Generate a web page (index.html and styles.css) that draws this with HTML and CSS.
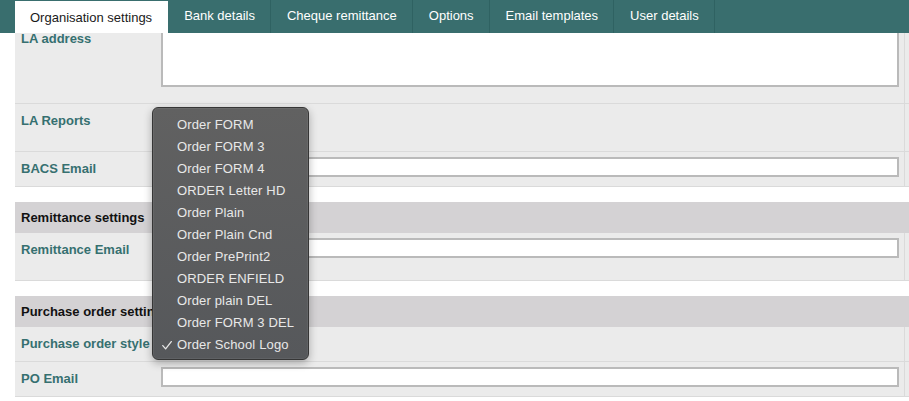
FILE: index.html
```html
<!DOCTYPE html>
<html lang="en">
<head>
<meta charset="utf-8">
<title>Organisation settings</title>
<link rel="stylesheet" href="styles.css">
</head>
<body>
<nav class="tabbar">
  <div class="tab active">Organisation settings</div>
  <div class="tab">Bank details</div>
  <div class="tab">Cheque remittance</div>
  <div class="tab">Options</div>
  <div class="tab">Email templates</div>
  <div class="tab">User details</div>
</nav>
<main class="content">
  <section class="section first">
    <div class="row">
      <div class="label">LA address</div>
      <div class="field"><div class="textarea"></div></div>
      <div class="edge"></div>
    </div>
    <div class="row tall">
      <div class="label">LA Reports</div>
      <div class="field"></div>
      <div class="edge"></div>
    </div>
    <div class="row">
      <div class="label">BACS Email</div>
      <div class="field"><div class="input"></div></div>
      <div class="edge"></div>
    </div>
  </section>
  <section class="section">
    <div class="head">Remittance settings</div>
    <div class="row tall">
      <div class="label">Remittance Email</div>
      <div class="field"><div class="input"></div></div>
      <div class="edge"></div>
    </div>
  </section>
  <section class="section">
    <div class="head">Purchase order settings</div>
    <div class="row">
      <div class="label">Purchase order style</div>
      <div class="field"></div>
      <div class="edge"></div>
    </div>
    <div class="row">
      <div class="label">PO Email</div>
      <div class="field"><div class="input"></div></div>
      <div class="edge"></div>
    </div>
  </section>
</main>
<div class="menu">
  <div class="item">Order FORM</div>
  <div class="item">Order FORM 3</div>
  <div class="item">Order FORM 4</div>
  <div class="item">ORDER Letter HD</div>
  <div class="item">Order Plain</div>
  <div class="item">Order Plain Cnd</div>
  <div class="item">Order PrePrint2</div>
  <div class="item">ORDER ENFIELD</div>
  <div class="item">Order plain DEL</div>
  <div class="item">Order FORM 3 DEL</div>
  <div class="item selected"><svg class="check" width="10" height="9" viewBox="0 0 10 9"><path d="M0.8 4.6 L3.6 7.9 L9.3 0.6" fill="none" stroke="#e6e6e6" stroke-width="1.3" stroke-linecap="round" stroke-linejoin="round"/></svg>Order School Logo</div>
</div>
</body>
</html>
```
FILE: styles.css
```css
body {
  margin: 0;
  font-family: "Liberation Sans", Arial, Helvetica, sans-serif;
  font-size: 13px;
  line-height: 15px;
  background: #ffffff;
  color: #111111;
}

.tabbar {
  position: relative;
  z-index: 2;
  display: flex;
  height: 33px;
  box-sizing: border-box;
  padding-left: 15px;
  background: #396e6e;
}

.tab {
  padding: 8px 15px 0 16px;
  color: #ffffff;
  border-right: 1px solid #2f6262;
  white-space: nowrap;
}

.tab.active {
  margin-top: 1px;
  padding: 9px 16px 0 15px;
  background: #ffffff;
  color: #1a1a1a;
  border-right: none;
}

.content {
  padding-left: 15px;
}

.section {
  margin-bottom: 15px;
}

.section.first {
  margin-top: -11px;
}

.head {
  padding: 8px 6px;
  background: #d4d2d4;
  font-weight: bold;
  color: #111111;
}

.row {
  display: grid;
  grid-template-columns: 146px 1fr 5px;
  min-height: 34px;
  background: #ebebeb;
  border-bottom: 1px solid #dadada;
}

.row.tall {
  min-height: 47px;
}

.label {
  padding: 9px 6px 0;
  font-weight: bold;
  color: #367070;
  white-space: nowrap;
}

.field {
  padding: 5px 5px 0 0;
}

.edge {
  border-left: 1px solid #dadada;
}

.input {
  box-sizing: border-box;
  height: 20px;
  background: #ffffff;
  border: 2px solid #bababa;
}

.textarea {
  box-sizing: border-box;
  height: 60px;
  margin-bottom: 16px;
  background: #ffffff;
  border: 2px solid #bababa;
}

.menu {
  position: absolute;
  left: 152px;
  top: 107px;
  width: 155px;
  padding: 6px 0 3px;
  background: linear-gradient(#616161, #56585b);
  border: 1px solid #363636;
  border-radius: 6px;
  box-shadow: 0 3px 8px rgba(0, 0, 0, 0.3), inset 0 0 0 1px rgba(255, 255, 255, 0.06);
}

.item {
  position: relative;
  padding-left: 24px;
  line-height: 22px;
  color: #e8e8e8;
  letter-spacing: 0.15px;
  white-space: nowrap;
}

.check {
  position: absolute;
  left: 9px;
  top: 7px;
}
```
